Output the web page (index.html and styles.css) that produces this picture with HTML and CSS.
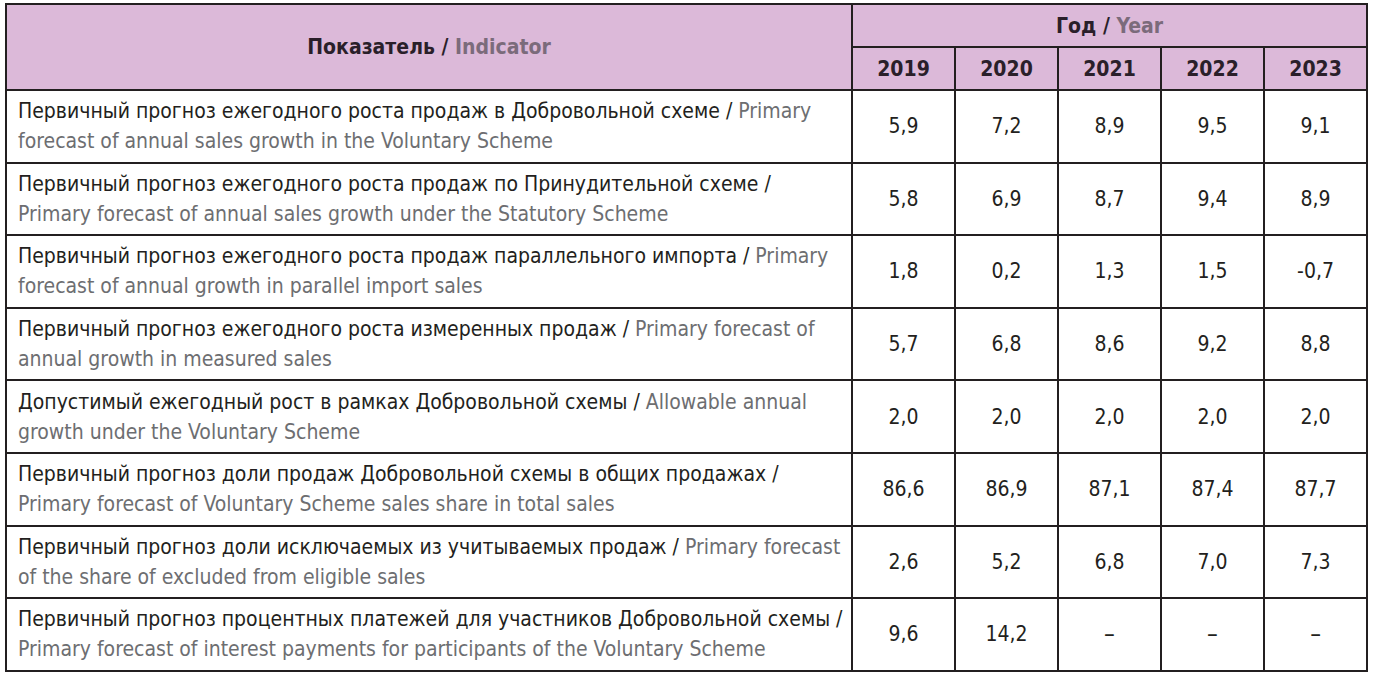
FILE: index.html
```html
<!DOCTYPE html>
<html lang="ru">
<head>
<meta charset="utf-8">
<link rel="stylesheet" href="styles.css">
</head>
<body>
<table class="data">
  <colgroup>
    <col class="c-ind">
    <col class="c-y"><col class="c-y"><col class="c-y"><col class="c-y"><col class="c-y">
  </colgroup>
  <thead>
    <tr class="h1">
      <th rowspan="2" class="ind-head">Показатель / <span class="en">Indicator</span></th>
      <th colspan="5">Год / <span class="en">Year</span></th>
    </tr>
    <tr class="h2">
      <th>2019</th><th>2020</th><th>2021</th><th>2022</th><th>2023</th>
    </tr>
  </thead>
  <tbody>
    <tr>
      <td class="ind">Первичный прогноз ежегодного роста продаж в Добровольной схеме / <span class="en">Primary<br>forecast of annual sales growth in the Voluntary Scheme</span></td>
      <td>5,9</td><td>7,2</td><td>8,9</td><td>9,5</td><td>9,1</td>
    </tr>
    <tr>
      <td class="ind">Первичный прогноз ежегодного роста продаж по Принудительной схеме /<br><span class="en">Primary forecast of annual sales growth under the Statutory Scheme</span></td>
      <td>5,8</td><td>6,9</td><td>8,7</td><td>9,4</td><td>8,9</td>
    </tr>
    <tr>
      <td class="ind">Первичный прогноз ежегодного роста продаж параллельного импорта / <span class="en">Primary<br>forecast of annual growth in parallel import sales</span></td>
      <td>1,8</td><td>0,2</td><td>1,3</td><td>1,5</td><td>-0,7</td>
    </tr>
    <tr>
      <td class="ind">Первичный прогноз ежегодного роста измеренных продаж / <span class="en">Primary forecast of<br>annual growth in measured sales</span></td>
      <td>5,7</td><td>6,8</td><td>8,6</td><td>9,2</td><td>8,8</td>
    </tr>
    <tr>
      <td class="ind">Допустимый ежегодный рост в рамках Добровольной схемы / <span class="en">Allowable annual<br>growth under the Voluntary Scheme</span></td>
      <td>2,0</td><td>2,0</td><td>2,0</td><td>2,0</td><td>2,0</td>
    </tr>
    <tr>
      <td class="ind">Первичный прогноз доли продаж Добровольной схемы в общих продажах /<br><span class="en">Primary forecast of Voluntary Scheme sales share in total sales</span></td>
      <td>86,6</td><td>86,9</td><td>87,1</td><td>87,4</td><td>87,7</td>
    </tr>
    <tr>
      <td class="ind">Первичный прогноз доли исключаемых из учитываемых продаж / <span class="en">Primary forecast<br>of the share of excluded from eligible sales</span></td>
      <td>2,6</td><td>5,2</td><td>6,8</td><td>7,0</td><td>7,3</td>
    </tr>
    <tr>
      <td class="ind">Первичный прогноз процентных платежей для участников Добровольной схемы /<br><span class="en">Primary forecast of interest payments for participants of the Voluntary Scheme</span></td>
      <td>9,6</td><td>14,2</td><td class="dash">–</td><td class="dash">–</td><td class="dash">–</td>
    </tr>
  </tbody>
</table>
</body>
</html>
```

FILE: styles.css
```css
html, body {
  margin: 0;
  padding: 0;
  background: #ffffff;
}

body {
  padding: 3px 0 0 5px;
  font-family: "Liberation Sans Narrow", "DejaVu Sans Condensed", "Liberation Sans", sans-serif;
  color: #231f20;
}

.data {
  border-collapse: collapse;
  table-layout: fixed;
  width: 1363px;
  border: 2px solid #231f20;
}

.c-ind { width: 846px; }
.c-y { width: 103px; }

.data th,
.data td {
  border: 2px solid #231f20;
  padding: 0;
}

.data thead th {
  background: #dcb9d9;
  font-weight: bold;
  font-size: 21px;
  text-align: center;
  color: #2a1f2a;
}

.data thead .en {
  color: #7b6b7b;
}

.h1 th { height: 41px; }
.h2 th { height: 41px; }

.data tbody td {
  height: 70.6px;
  text-align: center;
  vertical-align: middle;
  font-size: 21px;
  line-height: 30px;
}

.data tbody td.ind {
  text-align: left;
  padding: 0 0 0 11px;
  white-space: nowrap;
  overflow: hidden;
}

.data tbody td.dash {
  font-size: 24px;
}

.data tbody .en {
  color: #6d6e71;
}
```
